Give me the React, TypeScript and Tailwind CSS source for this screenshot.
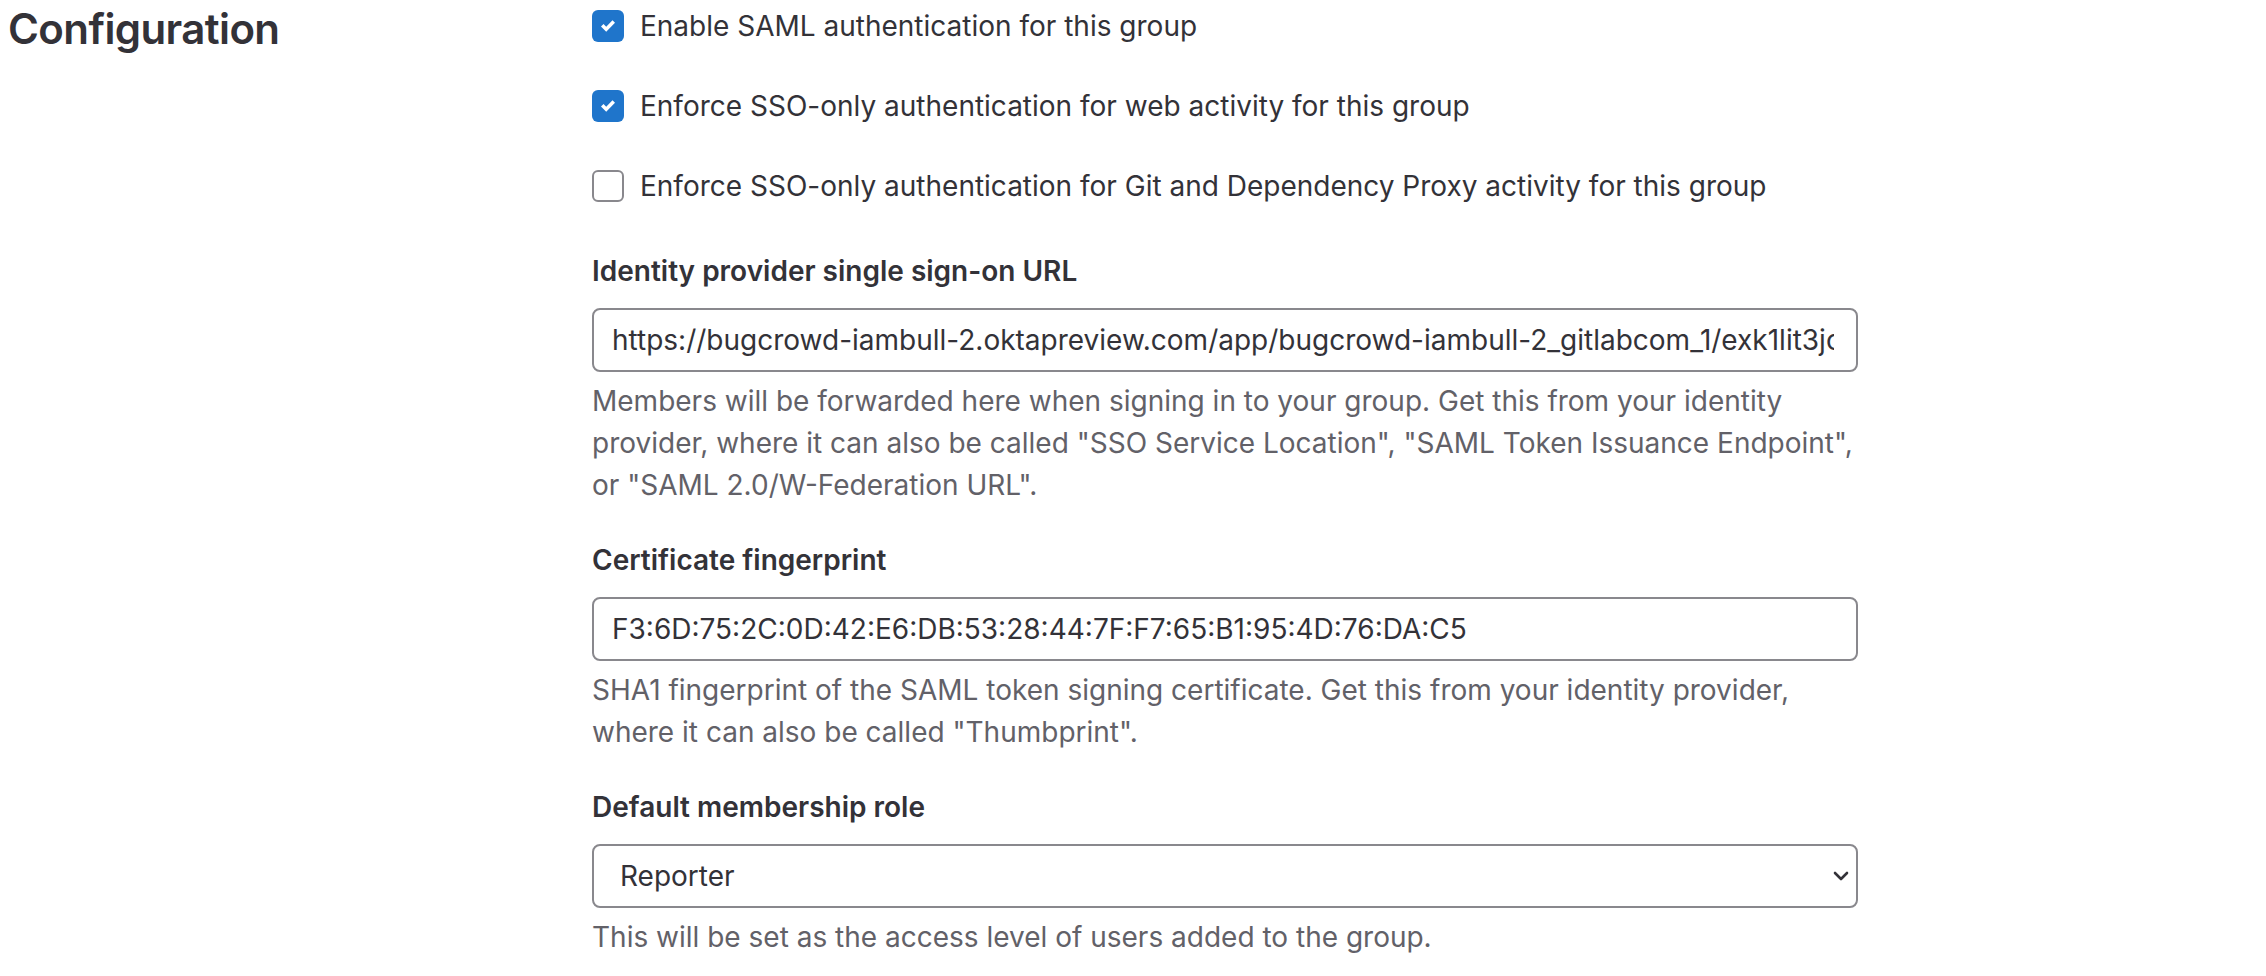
import React from "react";

function Checkbox({ checked }: { checked: boolean }) {
  if (!checked) {
    return <div className="w-8 h-8 shrink-0 rounded-[6px] border-2 border-[#89888d] bg-white" />;
  }
  return (
    <div className="w-8 h-8 shrink-0 rounded-[6px] bg-[#1f75cb] flex items-center justify-center">
      <svg width="16" height="14" viewBox="0 0 8 8" fill="#fff">
        <path d="M6.564.75l-3.59 3.612-1.538-1.55L0 4.26 2.974 7.25 8 2.193z" />
      </svg>
    </div>
  );
}

const checks = [
  { label: "Enable SAML authentication for this group", checked: true },
  { label: "Enforce SSO-only authentication for web activity for this group", checked: true },
  { label: "Enforce SSO-only authentication for Git and Dependency Proxy activity for this group", checked: false },
];

function Help({ children }: { children: React.ReactNode }) {
  return <p className="mt-2 text-[28px] leading-[42px] text-[#626168] whitespace-nowrap">{children}</p>;
}

function Label({ children }: { children: React.ReactNode }) {
  return <label className="block mb-4 text-[28px] leading-[42px] font-semibold text-[#333238]">{children}</label>;
}

export default function App() {
  const inputCls =
    "block w-full h-[64px] border-2 border-[#89888d] rounded-[8px] bg-white pl-[18px] pr-[22px] text-[28px] text-[#333238] outline-none";

  return (
    <div className="min-h-screen bg-white flex font-['Inter','Noto_Sans',sans-serif] text-[#333238] antialiased">
      {/* left column: section title */}
      <div className="w-[592px] shrink-0 pl-[8px]">
        <h4 className="mt-[3px] text-[42px] leading-[52px] font-semibold tracking-[-0.6px]">Configuration</h4>
      </div>

      {/* right column: form */}
      <div className="w-[1266px] shrink-0 pt-[5px]">
        <div className="flex flex-col gap-[38px]">
          {checks.map((c) => (
            <div key={c.label} className="flex items-center gap-4 h-[42px]">
              <Checkbox checked={c.checked} />
              <span className="text-[28px] leading-[42px]">{c.label}</span>
            </div>
          ))}
        </div>

        <div className="mt-[43px] mb-[33px]">
          <Label>Identity provider single sign-on URL</Label>
          <input
            readOnly
            className={inputCls}
            value="https://bugcrowd-iambull-2.oktapreview.com/app/bugcrowd-iambull-2_gitlabcom_1/exk1lit3jc9Xq2Ab0h7/sso/saml"
          />
          <Help>
            Members will be forwarded here when signing in to your group. Get this from your identity
            <br />
            provider, where it can also be called "SSO Service Location", "SAML Token Issuance Endpoint",
            <br />
            or "SAML 2.0/W-Federation URL".
          </Help>
        </div>

        <div className="mb-[33px]">
          <Label>Certificate fingerprint</Label>
          <input readOnly className={inputCls} value="F3:6D:75:2C:0D:42:E6:DB:53:28:44:7F:F7:65:B1:95:4D:76:DA:C5" />
          <Help>
            SHA1 fingerprint of the SAML token signing certificate. Get this from your identity provider,
            <br />
            where it can also be called "Thumbprint".
          </Help>
        </div>

        <div>
          <Label>Default membership role</Label>
          <div className="relative">
            <select
              defaultValue="reporter"
              className="block w-full h-[64px] appearance-none border-2 border-[#89888d] rounded-[8px] bg-white pl-[26px] pr-10 text-[28px] text-[#333238] outline-none"
            >
              <option value="guest">Guest</option>
              <option value="reporter">Reporter</option>
              <option value="developer">Developer</option>
              <option value="maintainer">Maintainer</option>
              <option value="owner">Owner</option>
            </select>
            <svg
              className="absolute right-[9px] top-1/2 -translate-y-1/2 pointer-events-none"
              width="16"
              height="10"
              viewBox="0 0 16 10"
              fill="none"
              stroke="#333238"
              strokeWidth="2.6"
              strokeLinecap="round"
              strokeLinejoin="round"
            >
              <path d="M2 2l6 6 6-6" />
            </svg>
          </div>
          <Help>This will be set as the access level of users added to the group.</Help>
        </div>
      </div>
    </div>
  );
}
